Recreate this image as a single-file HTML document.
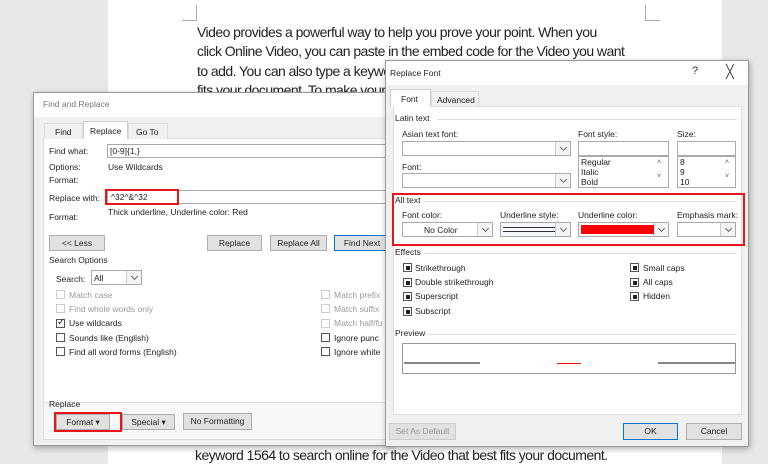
<!DOCTYPE html>
<html><head><style>
*{margin:0;padding:0;box-sizing:border-box}
body{width:768px;height:464px;overflow:hidden;background:#e8e8e8;font-family:"Liberation Sans",sans-serif;position:relative}
.a{position:absolute;white-space:nowrap}
.doc{font-size:14px;color:#222;letter-spacing:-0.55px}
.s{font-size:8.5px;color:#222}
.g{color:#9a9a9a}
.box{position:absolute;background:#fff;border:1px solid #aaa}
.btn{position:absolute;background:#e1e1e1;border:1px solid #adadad;font-size:8.5px;color:#222;text-align:center}
.dd{position:absolute;background:#fff;border:1px solid #aaa}
.dd:after{content:"";position:absolute;right:0;top:0;bottom:0;width:14px;border-left:1px solid #ccc;background:#f4f4f4}
.dd i{position:absolute;right:4px;top:50%;margin-top:-4px;width:5px;height:5px;border-right:1px solid #666;border-bottom:1px solid #666;transform:rotate(45deg);z-index:2}
.cb{position:absolute;width:9px;height:9px;border:1px solid #555;background:#fff}
.cb.d{border-color:#ccc}
.cb.f:after{content:"";position:absolute;left:1.5px;top:1.5px;width:4px;height:4px;background:#222}
.line{position:absolute;height:1px;background:#ddd}
</style></head><body>
<div class="a" style="left:108px;top:0;width:614px;height:464px;background:#fff"></div>
<div class="a" style="left:182px;top:5px;width:15px;height:16px;border-right:1px solid #aaa;border-bottom:1px solid #aaa"></div>
<div class="a" style="left:645px;top:5px;width:15px;height:16px;border-left:1px solid #aaa;border-bottom:1px solid #aaa"></div>
<div class="a doc" style="left:197px;top:24px">Video provides a powerful way to help you prove your point. When you</div>
<div class="a doc" style="left:197px;top:43px">click Online Video, you can paste in the embed code for the Video you want</div>
<div class="a doc" style="left:197px;top:63px">to add. You can also type a keyword</div>
<div class="a doc" style="left:197px;top:82px">fits your document. To make your</div>
<div class="a doc" style="left:195px;top:447px">keyword 1564 to search online for the Video that best fits your document.</div>

<!-- Find and Replace -->
<div class="a" style="left:33px;top:92px;width:360px;height:354px;background:#f0f0f0;border:1px solid #999;box-shadow:1px 2px 6px rgba(0,0,0,.3)"></div>
<div class="a" style="left:34px;top:93px;width:358px;height:24px;background:#fff"></div>
<div class="a s" style="left:43px;top:99px;color:#777">Find and Replace</div>
<div class="a" style="left:43px;top:138px;width:345px;height:265px;background:#fff;border:1px solid #ddd"></div>
<div class="a" style="left:43px;top:403px;width:345px;height:37px;background:#f8f8f8;border:1px solid #ddd;border-top:none"></div>
<div class="a s" style="left:44px;top:123px;width:39px;height:16px;border:1px solid #ddd;border-bottom:none;padding:3px 0 0 10px;background:#f0f0f0">Find</div>
<div class="a s" style="left:83px;top:121px;width:45px;height:18px;border:1px solid #ccc;border-bottom:none;background:#fff;padding:4px 0 0 6px">Replace</div>
<div class="a s" style="left:128px;top:123px;width:40px;height:16px;border:1px solid #ddd;border-bottom:none;padding:3px 0 0 7px;background:#f0f0f0">Go To</div>
<div class="a s" style="left:49px;top:146px">Find what:</div>
<div class="box" style="left:107px;top:144px;width:290px;height:14px"></div>
<div class="a s" style="left:110px;top:146px">[0-9]{1,}</div>
<div class="a s" style="left:49px;top:162px">Options:</div>
<div class="a s" style="left:108px;top:162px">Use Wildcards</div>
<div class="a s" style="left:49px;top:175px">Format:</div>
<div class="a s" style="left:49px;top:193px">Replace with:</div>
<div class="box" style="left:107px;top:190px;width:290px;height:14px"></div>
<div class="a" style="left:105px;top:189px;width:74px;height:16px;border:2px solid #e8151a"></div>
<div class="a s" style="left:111px;top:192px">^32^&amp;^32</div>
<div class="a s" style="left:108px;top:207px">Thick underline, Underline color: Red</div>
<div class="a s" style="left:49px;top:212px">Format:</div>
<div class="btn" style="left:49px;top:235px;width:56px;height:16px;line-height:14px">&lt;&lt; Less</div>
<div class="btn" style="left:207px;top:235px;width:55px;height:16px;line-height:14px">Replace</div>
<div class="btn" style="left:270px;top:235px;width:57px;height:16px;line-height:14px">Replace All</div>
<div class="btn" style="left:334px;top:235px;width:56px;height:16px;line-height:14px;border:1px solid #0078d7">Find Next</div>
<div class="a s" style="left:49px;top:255px">Search Options</div>
<div class="a s" style="left:56px;top:274px">Search:</div>
<div class="dd" style="left:91px;top:270px;width:51px;height:15px"><i></i></div>
<div class="a s" style="left:94px;top:273px">All</div>
<div class="cb d" style="left:56px;top:290px"></div><div class="a s g" style="left:69px;top:290px">Match case</div>
<div class="cb d" style="left:56px;top:304px"></div><div class="a s g" style="left:69px;top:304px">Find whole words only</div>
<div class="cb" style="left:56px;top:319px"></div><div class="a" style="left:57px;top:317px;font-size:10px;color:#222">✓</div><div class="a s" style="left:69px;top:318px">Use wildcards</div>
<div class="cb" style="left:56px;top:333px"></div><div class="a s" style="left:69px;top:333px">Sounds like (English)</div>
<div class="cb" style="left:56px;top:347px"></div><div class="a s" style="left:69px;top:347px">Find all word forms (English)</div>
<div class="cb d" style="left:321px;top:290px"></div><div class="a s g" style="left:334px;top:290px">Match prefix</div>
<div class="cb d" style="left:321px;top:304px"></div><div class="a s g" style="left:334px;top:304px">Match suffix</div>
<div class="cb d" style="left:321px;top:319px"></div><div class="a s g" style="left:334px;top:318px">Match half/fu</div>
<div class="cb" style="left:321px;top:333px"></div><div class="a s" style="left:334px;top:333px">Ignore punc</div>
<div class="cb" style="left:321px;top:347px"></div><div class="a s" style="left:334px;top:347px">Ignore white</div>
<div class="a s" style="left:49px;top:399px">Replace</div>
<div class="btn" style="left:56px;top:414px;width:54px;height:16px;line-height:14px">Format ▾</div>
<div class="a" style="left:54px;top:412px;width:68px;height:20px;border:2px solid #e8151a"></div>
<div class="btn" style="left:122px;top:414px;width:53px;height:16px;line-height:14px">Special ▾</div>
<div class="btn" style="left:183px;top:413px;width:69px;height:17px;line-height:15px">No Formatting</div>

<!-- Replace Font -->
<div class="a" style="left:385px;top:60px;width:364px;height:387px;background:#f0f0f0;border:1px solid #999;box-shadow:1px 2px 6px rgba(0,0,0,.3)"></div>
<div class="a" style="left:386px;top:61px;width:362px;height:24px;background:#fff"></div>
<div class="a s" style="left:390px;top:68px">Replace Font</div>
<div class="a" style="left:692px;top:65px;font-size:11px;color:#333">?</div>
<div class="a" style="left:726px;top:64px;font-size:13px;color:#444;font-weight:normal">╳</div>
<div class="a" style="left:393px;top:106px;width:349px;height:309px;background:#fff;border:1px solid #ddd"></div>
<div class="a s" style="left:390px;top:89px;width:41px;height:18px;border:1px solid #ccc;border-bottom:none;background:#fff;padding:4px 0 0 10px">Font</div>
<div class="a s" style="left:431px;top:91px;width:48px;height:15px;border:1px solid #ddd;border-bottom:none;padding:3px 0 0 5px">Advanced</div>
<div class="a s" style="left:395px;top:113px">Latin text</div><div class="line" style="left:437px;top:119px;width:300px"></div>
<div class="a s" style="left:402px;top:129px">Asian text font:</div>
<div class="dd" style="left:402px;top:141px;width:169px;height:15px"><i></i></div>
<div class="a s" style="left:402px;top:162px">Font:</div>
<div class="dd" style="left:402px;top:173px;width:169px;height:15px"><i></i></div>
<div class="a s" style="left:578px;top:129px">Font style:</div>
<div class="box" style="left:578px;top:141px;width:91px;height:15px"></div>
<div class="box" style="left:578px;top:156px;width:91px;height:32px"></div>
<div class="a s" style="left:581px;top:157px;line-height:10px">Regular<br>Italic<br>Bold</div>
<div class="a" style="left:657px;top:156px;font-size:7px;color:#555;line-height:14px">˄<br>˅</div>
<div class="a s" style="left:677px;top:129px">Size:</div>
<div class="box" style="left:677px;top:141px;width:59px;height:15px"></div>
<div class="box" style="left:677px;top:156px;width:59px;height:32px"></div>
<div class="a s" style="left:680px;top:157px;line-height:10px">8<br>9<br>10</div>
<div class="a" style="left:725px;top:156px;font-size:7px;color:#555;line-height:14px">˄<br>˅</div>
<div class="a" style="left:392px;top:193px;width:353px;height:53px;border:2px solid #e8151a"></div>
<div class="a s" style="left:395px;top:195px">All text</div><div class="line" style="left:425px;top:201px;width:312px"></div>
<div class="a s" style="left:402px;top:210px">Font color:</div>
<div class="a s" style="left:500px;top:210px">Underline style:</div>
<div class="a s" style="left:578px;top:210px">Underline color:</div>
<div class="a s" style="left:677px;top:210px">Emphasis mark:</div>
<div class="dd" style="left:402px;top:222px;width:91px;height:15px"><i></i></div>
<div class="a s" style="left:424px;top:225px">No Color</div>
<div class="dd" style="left:500px;top:222px;width:71px;height:15px;background:#f3f6fb"><i></i></div>
<div class="a" style="left:503px;top:227px;width:52px;height:5px;border-top:1px solid #333;border-bottom:1.5px solid #333"></div>
<div class="dd" style="left:578px;top:222px;width:91px;height:15px"><i></i></div>
<div class="a" style="left:581px;top:225px;width:73px;height:9px;background:#f00"></div>
<div class="dd" style="left:677px;top:222px;width:59px;height:15px"><i></i></div>
<div class="a s" style="left:395px;top:247px">Effects</div><div class="line" style="left:425px;top:253px;width:312px"></div>
<div class="cb f" style="left:403px;top:263px"></div><div class="a s" style="left:415px;top:263px">Strikethrough</div>
<div class="cb f" style="left:403px;top:278px"></div><div class="a s" style="left:415px;top:277px">Double strikethrough</div>
<div class="cb f" style="left:403px;top:292px"></div><div class="a s" style="left:415px;top:291px">Superscript</div>
<div class="cb f" style="left:403px;top:307px"></div><div class="a s" style="left:415px;top:306px">Subscript</div>
<div class="cb f" style="left:630px;top:263px"></div><div class="a s" style="left:643px;top:263px">Small caps</div>
<div class="cb f" style="left:630px;top:278px"></div><div class="a s" style="left:643px;top:277px">All caps</div>
<div class="cb f" style="left:630px;top:292px"></div><div class="a s" style="left:643px;top:291px">Hidden</div>
<div class="a s" style="left:395px;top:328px">Preview</div><div class="line" style="left:428px;top:334px;width:309px"></div>
<div class="a" style="left:402px;top:343px;width:334px;height:31px;border:1px solid #999;background:#fff"></div>
<div class="a" style="left:404px;top:362px;width:76px;height:1.5px;background:#888"></div>
<div class="a" style="left:557px;top:363px;width:24px;height:1px;background:#f00"></div>
<div class="a" style="left:658px;top:362px;width:77px;height:1.5px;background:#888"></div>
<div class="btn" style="left:389px;top:423px;width:67px;height:17px;line-height:15px;color:#999;border-color:#ccc">Set As Default</div>
<div class="btn" style="left:623px;top:423px;width:55px;height:17px;line-height:15px;border-color:#0078d7">OK</div>
<div class="btn" style="left:686px;top:423px;width:56px;height:17px;line-height:15px">Cancel</div>
</body></html>
